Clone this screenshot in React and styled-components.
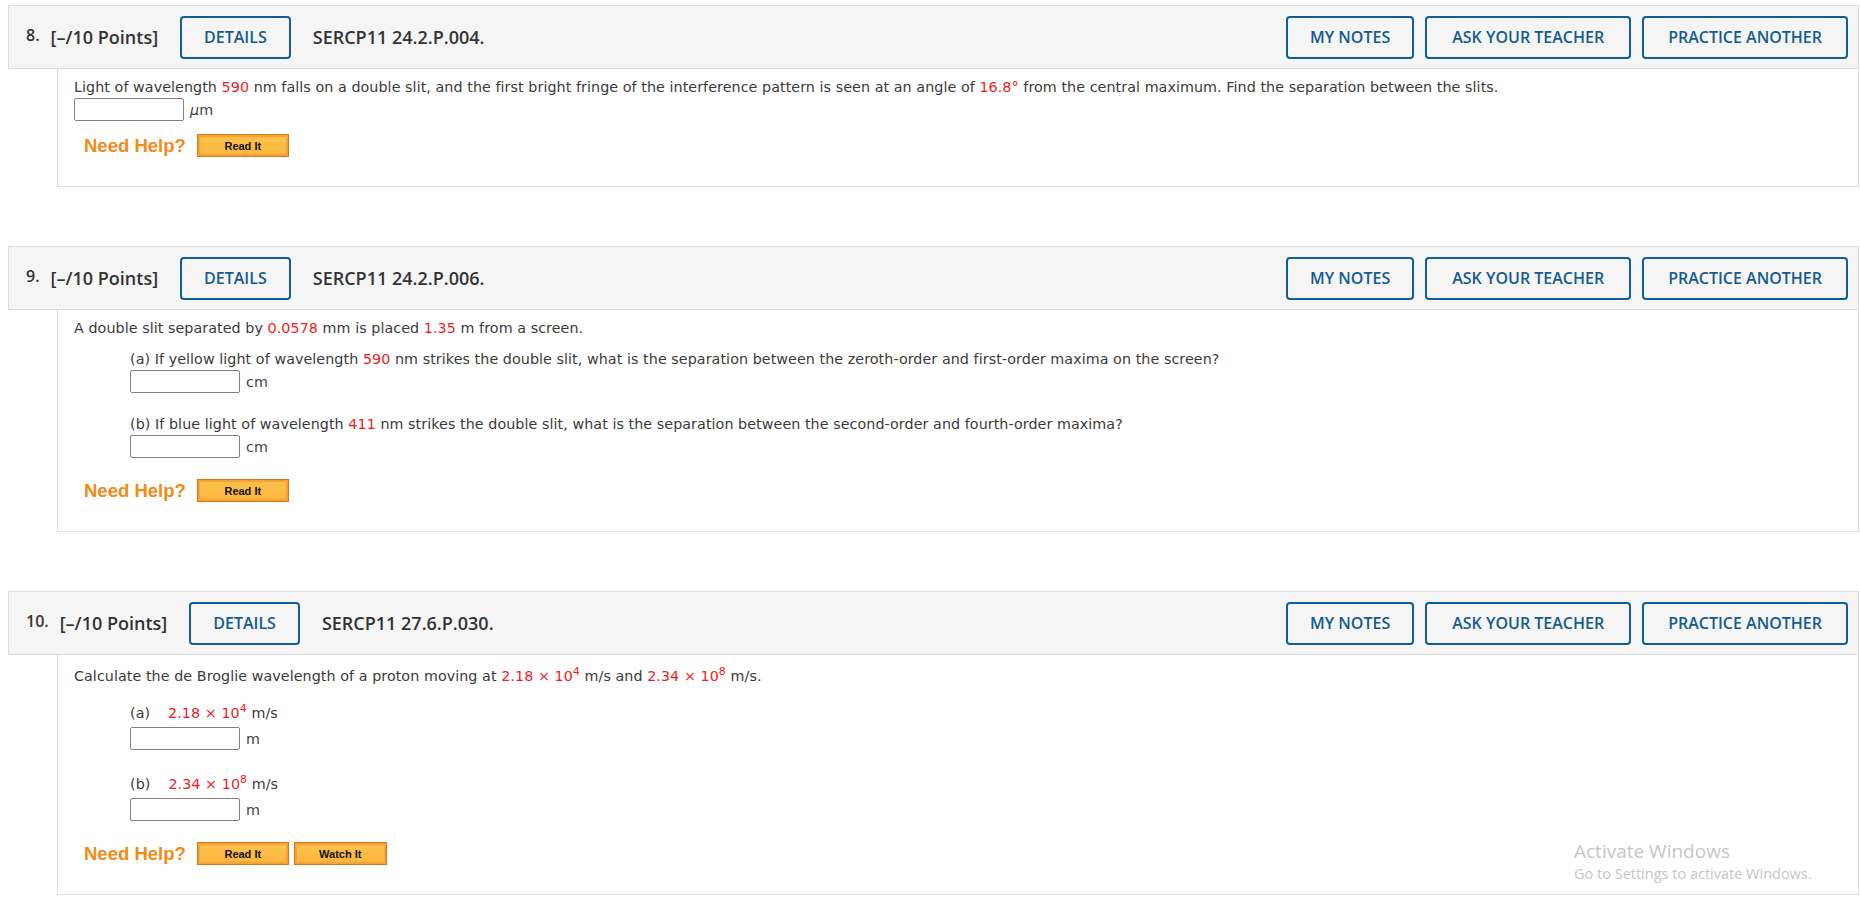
import React from "react"
import styled, { createGlobalStyle } from "styled-components"

const GlobalStyle = createGlobalStyle`
  body {
    margin: 0;
    background: #fff;
    font-family: "DejaVu Sans", Verdana, sans-serif;
    color: #333;
  }
`

const Page = styled.div`
  position: relative;
  padding: 5px 1px 0 8px;
  min-height: 904px;
`

const Question = styled.section`
  margin-bottom: 59px;
`

const Header = styled.div`
  display: flex;
  align-items: center;
  box-sizing: border-box;
  height: 64px;
  padding: 0 10px 0 17px;
  background: #f5f5f5;
  border: 1px solid #ddd;
  font-family: "Open Sans", "Noto Sans", sans-serif;
  color: #333;
`

const Num = styled.span`
  font-size: 16px;
  font-weight: 600;
  margin-right: 11px;
  position: relative;
  top: -2px;
`

const Points = styled.span`
  font-size: 18px;
  font-weight: 600;
  margin-right: 22px;
`

const OutlineButton = styled.button`
  box-sizing: border-box;
  height: 43px;
  padding: 0 ${(p) => p.$pad || 17}px;
  background: transparent;
  border: 2px solid #0e5f98;
  border-radius: 4px;
  color: #155b8e;
  font-family: "Open Sans", "Noto Sans", sans-serif;
  font-size: 16px;
  font-weight: 600;
  text-transform: uppercase;
  cursor: pointer;
`

const Code = styled.span`
  margin-left: 22px;
  font-size: 18px;
  font-weight: 600;
`

const HeaderActions = styled.div`
  margin-left: auto;
  display: flex;
  gap: 11px;
`

const Body = styled.div`
  display: flex;
  flex-direction: column;
  align-items: flex-start;
  margin-left: 49px;
  padding: 9px 16px 29px 16px;
  border: 1px solid #ddd;
  border-top: none;
  font-size: 14.3px;
  letter-spacing: 0.06px;
  line-height: 18px;
  color: #3a3a3a;
`

const Prompt = styled.p`
  margin: 0;
  line-height: ${(p) => (p.$tall ? 24 : 18)}px;
`

const Part = styled.div`
  margin: 13px 0 8px 56px;
  line-height: ${(p) => (p.$tall ? 24 : 18)}px;
  & + & {
    margin-top: 14px;
  }
`

const Label = styled.span`
  margin-right: ${(p) => p.$gap || 0}px;
`

const Red = styled.span`
  color: #ee1d23;
`

const Sup = styled.sup`
  font-size: 11px;
  line-height: 1;
`

const AnswerRow = styled.div`
  display: flex;
  align-items: center;
  gap: 6px;
  margin-top: 2px;
  line-height: 18px;
`

const AnswerInput = styled.input`
  box-sizing: border-box;
  width: 110px;
  height: 23px;
  border: 1px solid #808080;
  border-radius: 2px;
  background: #fff;
`

const Unit = styled.span`
  color: #444;
`

const HelpRow = styled.div`
  display: flex;
  align-items: center;
  gap: 5px;
  margin: 13px 0 0 10px;
`

const NeedHelp = styled.span`
  font-family: "Liberation Sans", Arial, sans-serif;
  font-weight: 700;
  font-size: 18.5px;
  letter-spacing: 0;
  color: #f28a1a;
  margin-right: 6px;
`

const HelpButton = styled.button`
  box-sizing: border-box;
  width: ${(p) => p.$w || 92}px;
  height: 23px;
  padding: 0;
  border: 1px solid #cf7a1c;
  box-shadow: inset 0 0 0 2px #f6a235;
  background: linear-gradient(#ffc34d, #fbb53c);
  font-family: "Liberation Sans", Arial, sans-serif;
  font-weight: 700;
  font-size: 11px;
  color: #111;
  cursor: pointer;
`

const ActivateNotice = styled.div`
  position: absolute;
  left: 1574px;
  top: 838px;
  font-family: "Open Sans", "Noto Sans", sans-serif;
  color: #c6c6c6;
  pointer-events: none;
`

const ActivateTitle = styled.div`
  font-size: 19px;
  line-height: 26px;
`

const ActivateSub = styled.div`
  font-size: 14.5px;
  line-height: 20px;
`

const QuestionHeader = ({ num, code }) => (
  <Header>
    <Num>{num}.</Num>
    <Points>[–/10 Points]</Points>
    <OutlineButton $pad={22}>Details</OutlineButton>
    <Code>{code}</Code>
    <HeaderActions>
      <OutlineButton $pad={22}>My Notes</OutlineButton>
      <OutlineButton $pad={25}>Ask Your Teacher</OutlineButton>
      <OutlineButton $pad={24}>Practice Another</OutlineButton>
    </HeaderActions>
  </Header>
)

const Answer = ({ unit }) => (
  <AnswerRow>
    <AnswerInput type="text" />
    <Unit>{unit}</Unit>
  </AnswerRow>
)

const Help = ({ watch }) => (
  <HelpRow>
    <NeedHelp>Need Help?</NeedHelp>
    <HelpButton>Read It</HelpButton>
    {watch && <HelpButton $w={93}>Watch It</HelpButton>}
  </HelpRow>
)

export default function App() {
  return (
    <Page>
      <GlobalStyle />

      <Question>
        <QuestionHeader num={8} code="SERCP11 24.2.P.004." />
        <Body>
          <Prompt>
            Light of wavelength <Red>590</Red> nm falls on a double slit, and the first bright
            fringe of the interference pattern is seen at an angle of <Red>16.8°</Red> from the
            central maximum. Find the separation between the slits.
          </Prompt>
          <Answer unit={<><i>μ</i>m</>} />
          <Help />
        </Body>
      </Question>

      <Question>
        <QuestionHeader num={9} code="SERCP11 24.2.P.006." />
        <Body>
          <Prompt>
            A double slit separated by <Red>0.0578</Red> mm is placed <Red>1.35</Red> m from a
            screen.
          </Prompt>
          <Part>
            (a) If yellow light of wavelength <Red>590</Red> nm strikes the double slit, what is the
            separation between the zeroth-order and first-order maxima on the screen?
            <Answer unit="cm" />
          </Part>
          <Part>
            (b) If blue light of wavelength <Red>411</Red> nm strikes the double slit, what is the
            separation between the second-order and fourth-order maxima?
            <Answer unit="cm" />
          </Part>
          <Help />
        </Body>
      </Question>

      <Question>
        <QuestionHeader num={10} code="SERCP11 27.6.P.030." />
        <Body>
          <Prompt $tall>
            Calculate the de Broglie wavelength of a proton moving at{" "}
            <Red>
              2.18 × 10<Sup>4</Sup>
            </Red>{" "}
            m/s and{" "}
            <Red>
              2.34 × 10<Sup>8</Sup>
            </Red>{" "}
            m/s.
          </Prompt>
          <Part $tall>
            <Label $gap={18}>(a)</Label>
            <Red>
              2.18 × 10<Sup>4</Sup>
            </Red>{" "}
            m/s
            <Answer unit="m" />
          </Part>
          <Part $tall>
            <Label $gap={18}>(b)</Label>
            <Red>
              2.34 × 10<Sup>8</Sup>
            </Red>{" "}
            m/s
            <Answer unit="m" />
          </Part>
          <Help watch />
        </Body>
      </Question>

      <ActivateNotice>
        <ActivateTitle>Activate Windows</ActivateTitle>
        <ActivateSub>Go to Settings to activate Windows.</ActivateSub>
      </ActivateNotice>
    </Page>
  )
}
